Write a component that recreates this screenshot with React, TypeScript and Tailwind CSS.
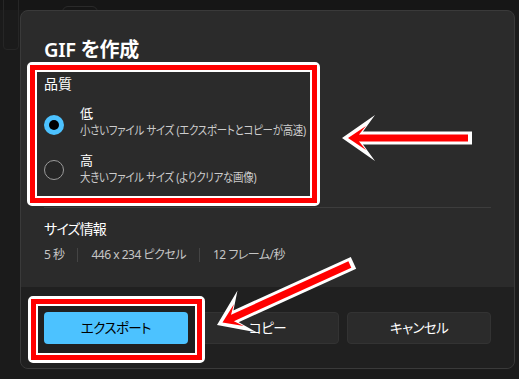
import React from "react";

const font = {
  fontFamily: '"Noto Sans", "Noto Sans CJK JP", sans-serif',
};

function Arrow({ x, y, len, angle }: { x: number; y: number; len: number; angle: number }) {
  return (
    <g transform={`translate(${x} ${y}) rotate(${angle})`}>
      <rect x={16} y={-6.5} width={len - 16} height={13} fill="#ffffff" />
      <polygon points="0,0 33,-23 21,-6.5 21,6.5 33,23" fill="#ffffff" />
      <rect x={14} y={-3.5} width={len - 18} height={7} fill="#ff0000" />
      <polygon points="6,0 24,-12 17,-3.5 17,3.5 24,12" fill="#ff0000" />
    </g>
  );
}

function AnnoBox({ className }: { className: string }) {
  return (
    <div className={`absolute rounded-[5px] border-[3px] border-white ${className}`}>
      <div className="h-full w-full border-[5px] border-[#ff0000]">
        <div className="h-full w-full border-2 border-white" />
      </div>
    </div>
  );
}

export default function App() {
  return (
    <div
      className="relative w-[519px] h-[379px] overflow-hidden bg-[#1b1b1b] pl-[20px] pt-[10px] [font-feature-settings:'palt']"
      style={font}
    >
      {/* background hints */}
      <div className="absolute left-0 top-0 h-[10px] w-[519px] bg-[#161616]" />
      <div className="absolute left-[3px] top-[-4px] h-[54px] w-[16px] border border-[#262626] rounded-[4px]" />
      <div className="absolute left-[62px] top-[6px] h-[10px] w-[36px] rounded-t-[6px] border border-[#2a2a2a]" />

      {/* dialog */}
      <div className="relative flex h-[359px] w-[495px] flex-col overflow-hidden rounded-[8px] border border-[#3a3a3a] bg-[#2b2b2b]">
        <div className="flex flex-1 flex-col px-[23px] pt-[25px]">
          <div className="text-[20px] leading-[28px] font-semibold tracking-[-0.3px] text-white">GIF を作成</div>

          <div className="mt-[10px] text-[14px] leading-[20px] text-white">品質</div>

          <div className="mt-[10px] flex flex-col gap-[11px]">
            <div className="flex items-center">
              <div className="mt-[5px] flex h-[20px] w-[20px] items-center justify-center rounded-full bg-[#4cc2ff]">
                <div className="h-[10px] w-[10px] rounded-full bg-black" />
              </div>
              <div className="ml-[16px] flex flex-col items-start">
                <span className="text-[13px] leading-[18px] text-white">低</span>
                <span className="inline-block origin-left scale-x-[0.87] whitespace-nowrap text-[12px] leading-[18px] tracking-[-0.3px] text-[#cccccc]">
                  小さいファイル サイズ (エクスポートとコピーが高速)
                </span>
              </div>
            </div>
            <div className="flex items-center">
              <div className="mt-[2px] h-[20px] w-[20px] rounded-full border border-[#9b9b9b] bg-[#262626]" />
              <div className="ml-[16px] flex flex-col items-start">
                <span className="text-[13px] leading-[18px] text-white">高</span>
                <span className="inline-block origin-left scale-x-[0.87] whitespace-nowrap text-[12px] leading-[18px] tracking-[-0.3px] text-[#cccccc]">
                  大きいファイル サイズ (よりクリアな画像)
                </span>
              </div>
            </div>
          </div>

          <div className="mt-[20px] h-px w-full bg-[#3d3d3d]" />

          <div className="mt-[11px] text-[14px] leading-[20px] tracking-[-0.8px] text-white">サイズ情報</div>

          <div className="mt-[8px] flex items-center text-[12px] leading-[16px] tracking-[-0.5px] text-[#c5c5c5]">
            <span>5 秒</span>
            <span className="mx-[13px] h-[14px] w-px bg-[#444444]" />
            <span>446 x 234 ピクセル</span>
            <span className="mx-[13px] h-[14px] w-px bg-[#444444]" />
            <span>12 フレーム/秒</span>
          </div>
        </div>

        <div className="grid h-[81px] grid-cols-3 gap-2 bg-[#202020] px-[23px] pt-[25px] pb-[24px]">
          <button className="flex h-[32px] items-center justify-center rounded-[4px] bg-[#4cc2ff] text-[13.5px] tracking-[-0.6px] text-black">
            エクスポート
          </button>
          <button className="flex h-[32px] items-center justify-center rounded-[4px] border border-[#333333] bg-[#2b2b2b] text-[13.5px] tracking-[-0.6px] text-white">
            コピー
          </button>
          <button className="flex h-[32px] items-center justify-center rounded-[4px] border border-[#333333] bg-[#2b2b2b] text-[13.5px] tracking-[-0.6px] text-white">
            キャンセル
          </button>
        </div>
      </div>

      {/* annotations */}
      <AnnoBox className="left-[27px] top-[62px] h-[144px] w-[293px]" />
      <AnnoBox className="left-[28px] top-[296px] h-[67px] w-[177px]" />
      <svg className="pointer-events-none absolute left-0 top-0" width={519} height={379}>
        <Arrow x={342} y={138} len={130} angle={0} />
        <Arrow x={217} y={325} len={150} angle={-24.5} />
      </svg>
    </div>
  );
}
